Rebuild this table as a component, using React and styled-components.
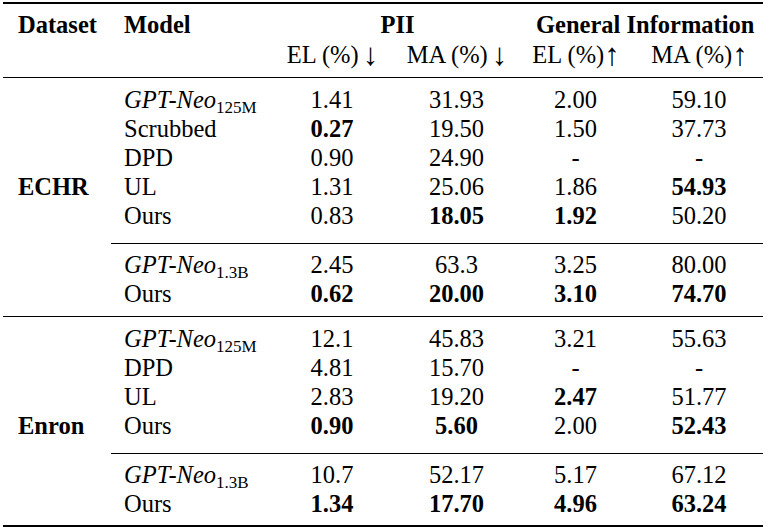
import styled, { createGlobalStyle } from "styled-components";

const GlobalStyle = createGlobalStyle`
    html, body {
        margin: 0;
        padding: 0;
        background: #FFFFFF;
    }
`

const Page = styled.div`
    width: 770px;
    height: 527px;
    padding-top: 2px;
    padding-left: 3px;
    box-sizing: border-box;
`

const Table = styled.table`
    width: 760px;
    table-layout: fixed;
    border-collapse: collapse;
    font-family: "Liberation Serif", "Times New Roman", serif;
    font-size: 24.5px;
    line-height: 29px;
    color: #000000;
`

const Row = styled.tr`
    border-top: ${p => p.$rule ? `${p.$rule}px solid #000` : "none"};
    border-bottom: ${p => p.$bottomRule ? `${p.$bottomRule}px solid #000` : "none"};

    & > td, & > th {
        padding-top: ${p => p.$padTop || 0}px;
        padding-bottom: ${p => p.$padBottom || 0}px;
        border-top: none;
    }

    ${p => p.$cline && `
        & > td:not(:first-child) {
            border-top: 1px solid #000;
        }
    `}
`

const HeadCell = styled.th`
    font-weight: bold;
    text-align: ${p => p.$align || "center"};
    padding-left: ${p => p.$padLeft ?? 14}px;
    padding-right: 14px;
    line-height: 30px;
    white-space: nowrap;
`

const SubHeadCell = styled.th`
    font-weight: normal;
    text-align: center;
    padding-left: ${p => p.$padLeft ?? 0}px;
    padding-right: 0;
    line-height: 30px;
    white-space: nowrap;
`

const Arrow = styled.span`
    font-family: "Liberation Serif", serif;
    font-size: 31px;
    line-height: 0;
    vertical-align: -2px;
    margin-left: ${p => p.$gap ? 4 : 0}px;
`

const DatasetCell = styled.td`
    font-weight: bold;
    padding-left: 15px;
    white-space: nowrap;
`

const ModelCell = styled.td`
    padding-left: 13px;
    white-space: nowrap;
`

const ValueCell = styled.td`
    text-align: center;
    font-weight: ${p => p.$bold ? "bold" : "normal"};
    padding-left: ${p => p.$padLeft ?? 0}px;
    white-space: nowrap;
`

const Italic = styled.span`
    font-style: italic;
`

const Sub = styled.span`
    font-size: 17px;
    font-style: normal;
    vertical-align: -5px;
    line-height: 0;
`

const Model = ({ name, size }) => size
    ? <><Italic>{name}</Italic><Sub>{size}</Sub></>
    : name

const groups = [
    {
        dataset: "ECHR",
        labelAt: 3,
        base: [
            { name: "GPT-Neo", size: "125M", v: ["1.41", "31.93", "2.00", "59.10"] },
            { name: "Scrubbed", v: ["0.27", "19.50", "1.50", "37.73"], b: [0] },
            { name: "DPD", v: ["0.90", "24.90", "-", "-"] },
            { name: "UL", v: ["1.31", "25.06", "1.86", "54.93"], b: [3] },
            { name: "Ours", v: ["0.83", "18.05", "1.92", "50.20"], b: [1, 2] },
        ],
        large: [
            { name: "GPT-Neo", size: "1.3B", v: ["2.45", "63.3", "3.25", "80.00"] },
            { name: "Ours", v: ["0.62", "20.00", "3.10", "74.70"], b: [0, 1, 2, 3] },
        ],
    },
    {
        dataset: "Enron",
        labelAt: 3,
        base: [
            { name: "GPT-Neo", size: "125M", v: ["12.1", "45.83", "3.21", "55.63"] },
            { name: "DPD", v: ["4.81", "15.70", "-", "-"] },
            { name: "UL", v: ["2.83", "19.20", "2.47", "51.77"], b: [2] },
            { name: "Ours", v: ["0.90", "5.60", "2.00", "52.43"], b: [0, 1, 3] },
        ],
        large: [
            { name: "GPT-Neo", size: "1.3B", v: ["10.7", "52.17", "5.17", "67.12"] },
            { name: "Ours", v: ["1.34", "17.70", "4.96", "63.24"], b: [0, 1, 2, 3] },
        ],
    },
]

const valuePad = [0, 0, 0, 6]

const DataRow = ({ row, label, ...rest }) => (
    <Row {...rest}>
        <DatasetCell>{label}</DatasetCell>
        <ModelCell><Model name={row.name} size={row.size} /></ModelCell>
        {row.v.map((val, i) => (
            <ValueCell key={i} $bold={row.b && row.b.includes(i)} $padLeft={valuePad[i]}>{val}</ValueCell>
        ))}
    </Row>
)

export default function App() {
    return <>
        <GlobalStyle />
        <Page>
            <Table>
                <colgroup>
                    <col style={{ width: 108 }} />
                    <col style={{ width: 162 }} />
                    <col style={{ width: 119 }} />
                    <col style={{ width: 130 }} />
                    <col style={{ width: 108 }} />
                    <col style={{ width: 133 }} />
                </colgroup>
                <thead>
                    <Row $rule={2} $padTop={6}>
                        <HeadCell $align="left" $padLeft={15}>Dataset</HeadCell>
                        <HeadCell $align="left" $padLeft={13}>Model</HeadCell>
                        <HeadCell colSpan={2}>PII</HeadCell>
                        <HeadCell colSpan={2} $padLeft={14}>General Information</HeadCell>
                    </Row>
                    <Row $padBottom={7}>
                        <SubHeadCell />
                        <SubHeadCell />
                        <SubHeadCell>EL (%)<Arrow $gap>↓</Arrow></SubHeadCell>
                        <SubHeadCell>MA (%)<Arrow $gap>↓</Arrow></SubHeadCell>
                        <SubHeadCell>EL (%)<Arrow>↑</Arrow></SubHeadCell>
                        <SubHeadCell $padLeft={6}>MA (%)<Arrow>↑</Arrow></SubHeadCell>
                    </Row>
                </thead>
                {groups.map((g, gi) => (
                    <tbody key={g.dataset}>
                        {g.base.map((row, i) => (
                            <DataRow
                                key={"b" + i}
                                row={row}
                                label={i === g.labelAt ? g.dataset : ""}
                                $rule={i === 0 ? 1 : 0}
                                $padTop={i === 0 ? 7 : 0}
                                $padBottom={i === g.base.length - 1 ? 13 : 0}
                            />
                        ))}
                        {g.large.map((row, i) => (
                            <DataRow
                                key={"l" + i}
                                row={row}
                                label=""
                                $cline={i === 0}
                                $padTop={i === 0 ? 6 : 0}
                                $padBottom={i === g.large.length - 1 ? (gi === groups.length - 1 ? 7 : 8) : 0}
                                $bottomRule={gi === groups.length - 1 && i === g.large.length - 1 ? 2 : 0}
                            />
                        ))}
                    </tbody>
                ))}
            </Table>
        </Page>
    </>
}
